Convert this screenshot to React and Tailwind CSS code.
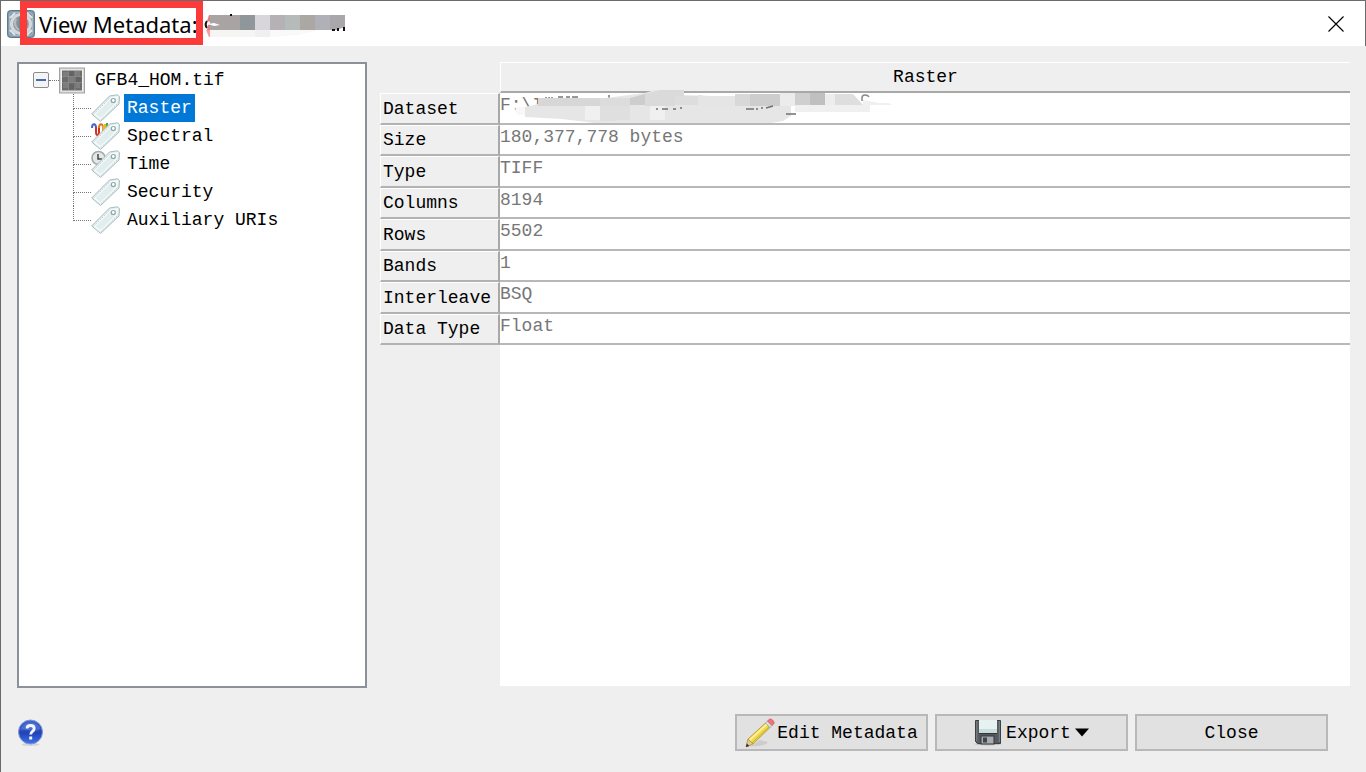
import { useState } from 'react';

const ITEMS = [
    { id: 'raster', label: 'Raster' },
    { id: 'spectral', label: 'Spectral', mark: 'wave' },
    { id: 'time', label: 'Time', mark: 'clock' },
    { id: 'security', label: 'Security' },
    { id: 'aux', label: 'Auxiliary URIs' },
];

const ROWS = [
    { label: 'Dataset', value: 'F:\\I', redacted: true },
    { label: 'Size', value: '180,377,778 bytes' },
    { label: 'Type', value: 'TIFF' },
    { label: 'Columns', value: '8194' },
    { label: 'Rows', value: '5502' },
    { label: 'Bands', value: '1' },
    { label: 'Interleave', value: 'BSQ' },
    { label: 'Data Type', value: 'Float' },
];

const AppIcon = () => (
    <svg width="28" height="28" viewBox="0 0 28 28" className="shrink-0" aria-hidden="true">
        <rect x="0.5" y="0.5" width="27" height="27" rx="3" fill="#7f98aa" stroke="#5f7b90" />
        <rect x="2.5" y="2.5" width="23" height="23" rx="3" fill="none" stroke="#a9bac6" />
        <path d="M3 8L8 3M20 3l5 5M3 20l5 5M20 25l5-5" stroke="#dfe6ea" strokeWidth="2" />
        <circle cx="14" cy="14" r="9.5" fill="#8b979f" stroke="#d3d8da" strokeWidth="3.2" />
        <path d="M12 7c6-1 9 3 8 8s-5 6-9 5z" fill="#76848d" />
        <path d="M9 9c-2 4-1 8 3 11" fill="none" stroke="#b4bcc1" strokeWidth="2" />
    </svg>
);

const RasterIcon = () => (
    <svg width="26" height="27" viewBox="0 0 26 27" className="shrink-0" aria-hidden="true">
        <rect x="0.5" y="1" width="25" height="25" fill="#d5d5d5" stroke="#a3a3a3" />
        <rect x="2" y="2.5" width="22" height="22" fill="#f1f1f1" />
        <rect x="3" y="3.5" width="20" height="20" fill="#6c6c6c" />
        <path d="M4 5h5v4H4zM16 4h5v5h-5zM10 10h5v5h-5zM4 16h5v5H4zM17 16h4v5h-4z" fill="#7d7d7d" />
        <path d="M10 4h5v5h-5zM17 10h5v5h-5zM10 17h5v5h-5z" fill="#636363" />
        <path d="M3 9.5h20M3 15.5h20M9.5 4v19M16 4v19" stroke="#8b8b8b" strokeWidth="0.8" />
    </svg>
);

const TagIcon = ({ mark }) => (
    <svg width="29" height="28" viewBox="0 0 29 28" className="shrink-0" aria-hidden="true">
        {mark === 'wave' && (
            <g fill="none" strokeWidth="2">
                <path d="M1 6c0-5 4-5 4 0" stroke="#3a68d8" />
                <path d="M5 5v5c0 4 3 4 3 0V5" stroke="#cf3323" />
                <path d="M8 6c0-5 4-5 4 0v7" stroke="#dd7924" />
                <path d="M12.5 11V4M14 2v5" stroke="#e5bd1c" />
                <path d="M16 1v5" stroke="#4aa64b" />
            </g>
        )}
        {mark === 'clock' && (
            <g>
                <circle cx="7.5" cy="8" r="6.5" fill="#e6e8e8" stroke="#a6aaaa" strokeWidth="1.6" />
                <path d="M7 4v5h4" fill="none" stroke="#414747" strokeWidth="1.5" />
            </g>
        )}
        <path d="M0.7 20L18.5 2l8-1.2 2 1.7-.5 7.5L9.5 27.5z" fill="#e2eeee" stroke="#a9bcbe" />
        <path d="M3.5 20.2L19.8 4l6.4-1-.6 6.2L9.6 25z" fill="none" stroke="#f7fcfc" strokeWidth="1.2" />
        <path d="M2.5 20.5L19 4M10 25.5L26.5 9.5" fill="none" stroke="#b0c2c3" strokeWidth="0.7" strokeDasharray="1.5 1.5" />
        <circle cx="22.3" cy="6.5" r="2" fill="#fff" stroke="#8fa5a7" strokeWidth="1.2" />
    </svg>
);

const PencilIcon = () => (
    <svg width="30" height="30" viewBox="0 0 30 30" className="shrink-0" aria-hidden="true">
        <path d="M5 28.5C13 29 22 27 23 24l-8-2z" fill="#cdcdcd" />
        <path d="M1 29l2-8 5 5z" fill="#e5c993" stroke="#a48c50" strokeWidth="0.8" />
        <path d="M1 29l.8-3.4 2.5 2.5z" fill="#292929" />
        <path d="M3 21L20.5 5l4.5 4.5L8 26z" fill="#f0d84d" stroke="#ac9534" strokeWidth="0.8" />
        <path d="M4.8 22L22 6.2" stroke="#fff1a0" strokeWidth="1.7" />
        <path d="M7 25L24.2 8.7" stroke="#cfaa2b" />
        <path d="M20.5 5l2-2 4.6 4.6L25 9.5z" fill="#d9e0e3" stroke="#9ba6aa" strokeWidth="0.7" />
        <path d="M22.5 3l1.5-1.6c2-1.6 6.5 2.2 4.7 4.6L27 7.6z" fill="#ee7479" stroke="#d55157" strokeWidth="0.7" />
    </svg>
);

const DiskIcon = () => (
    <svg width="28" height="27" viewBox="0 0 28 27" className="shrink-0" aria-hidden="true">
        <ellipse cx="14" cy="25" rx="13" ry="1.5" fill="#bababa" />
        <path d="M1.5 1.5h25v23h-23l-2-2z" fill="#555b60" stroke="#3b4044" />
        <rect x="5" y="1" width="18" height="13" fill="#e6f2f1" />
        <path d="M5 10h18v4H5z" fill="#c9dddc" />
        <path d="M5 14.5h18" stroke="#303437" />
        <path d="M2.8 2v20M25.3 2v21" stroke="#80868a" />
        <rect x="7" y="17" width="13" height="8" fill="#a7abb4" stroke="#34383b" />
        <rect x="9" y="18.5" width="4" height="5" fill="#41464b" />
    </svg>
);

const HelpIcon = () => (
    <svg width="27" height="28" viewBox="0 0 27 28" aria-hidden="true">
        <defs>
            <linearGradient id="help" x1="0" y1="0" x2="0" y2="1">
                <stop offset="0" stopColor="#4168d2" />
                <stop offset="0.55" stopColor="#2144b5" />
                <stop offset="1" stopColor="#3f73ef" />
            </linearGradient>
        </defs>
        <ellipse cx="13.5" cy="25.5" rx="9" ry="1.5" fill="#d3d3d6" />
        <circle cx="13.5" cy="13" r="12" fill="url(#help)" stroke="#8298d6" />
        <path d="M3.5 11C5 2 21 1 23.5 10 17 14 10 10 3.5 11" fill="#6080d8" opacity="0.55" />
        <path d="M10 9.5c0-4 7.2-4 7.2 0 0 3-3.5 2.8-3.5 6" fill="none" stroke="#f3f5fc" strokeWidth="2.8" />
        <rect x="12.2" y="17.5" width="3" height="3" fill="#f3f5fc" />
    </svg>
);

const TitleMosaic = () => (
    <svg width="140" height="28" viewBox="0 0 140 28" className="shrink-0 overflow-visible" aria-hidden="true">
        <path d="M1 11c-1.5 2-1.5 5 0 7" fill="none" stroke="#111" strokeWidth="2" />
        <path d="M3 5h2v7l-4-1zM2 15l3-1v6H1z" fill="#de7f82" />
        <path d="M0 20h5v7H3z" fill="#f79da0" />
        <path d="M4 5h30v15H4z" fill="#aaa3a4" />
        <path d="M34 5h15v15H34z" fill="#90979a" />
        <path d="M49 5h15v15H49z" fill="#d8d6da" />
        <path d="M64 5h15v15H64z" fill="#b5b1b4" />
        <path d="M79 5h15v15H79z" fill="#b5bbb9" />
        <path d="M94 5h15v15H94z" fill="#aba8a4" />
        <path d="M109 5h15v15h-15z" fill="#b0b1b8" />
        <path d="M124 5h15v12l-9 3h-6z" fill="#a9a7aa" />
        <path d="M4 20h45v7H4z" fill="#f5f5f3" />
        <path d="M49 20h15v7H49z" fill="#f0f0f2" />
        <path d="M64 20h50l-22 5-28 2z" fill="#f9f9f9" />
        <path d="M2 14l6-1 6 2-6 1z" fill="#fff" />
        <path d="M24 5h2M126 20h3M132 18v3M138 17v4" stroke="#111" strokeWidth="2" />
    </svg>
);

const PathMosaic = () => (
    <svg
        width="370"
        height="30"
        viewBox="0 0 370 30"
        className="absolute left-2 top-0 overflow-visible"
        aria-hidden="true"
    >
        {/* tops of the hidden characters */}
        <path d="M38 4v2M41 4v2M44 4v2M50 4h5M58 4h4M64 4h6M101 2v4M115 4h6M124 4h7M134 4h5" stroke="#777" strokeWidth="1.5" />
        <path d="M17 14l13-3V7l7-2h60l40-5 10-3h28v5l62 2v5h46v14l-8 5-12 2H87l-33-4-37-2z" fill="#e6e6e6" />
        <path d="M30 5h62v8H30z" fill="#d7d7d7" />
        <path d="M92 5h30v8H92z" fill="#dcdcdc" />
        <path d="M122 5l15-4v11h-15z" fill="#cdcdcd" />
        <path d="M137 1l15-4h24v8h-9v8h-30z" fill="#dadada" />
        <path d="M167 3h30l-7-1v10h-23z" fill="#ddd" />
        <path d="M190 3h37v10h-37z" fill="#e5e5e5" />
        <path d="M227 1h15v12h-15z" fill="#d8d8d8" />
        <path d="M242 1h30v12h-30z" fill="#cdcdcd" />
        <path d="M272 0h15v13h-15z" fill="#ececec" />
        <path d="M287 0h15v12h-15z" fill="#cfcfcf" />
        <path d="M302 0h15v12h-15z" fill="#c0c0c0" />
        <path d="M317 1h10v11h-10z" fill="#ededed" />
        <path d="M327 1h18l10 11h-28z" fill="#dedede" />
        <path d="M287 12h75v7h-75z" fill="#f0f0f0" />
        <path d="M355 7l16 3h10l3 2h-22l-7 1z" fill="#f0f0f0" />
        <path d="M77 13h15v14H77zM142 13h15v14h-15z" fill="#f0f0f0" />
        <path d="M92 13h15v15H92zM107 13h15v14h-15z" fill="#dfdfdf" />
        <path d="M7 14h10v8H9z" fill="#f8f8f8" />
        <path d="M148 16h2M154 16h6M165 16h3M172 15h2M238 16h8M249 15v2M254 14v2M258 15l7-2M278 21h10" stroke="#707070" strokeWidth="1.5" />
        <path d="M354 8V5q0-3 3-3t4 2" fill="none" stroke="#888" strokeWidth="1.5" />
    </svg>
);

// Dotted branch in front of a child node
const Branch = ({ last }) => (
    <span className="flex w-[18px] shrink-0 flex-col self-stretch" aria-hidden="true">
        <span className="flex-1 border-b border-l border-dotted border-[#777]" />
        <span className={last ? 'flex-1' : 'flex-1 border-l border-dotted border-[#777]'} />
    </span>
);

const FootButton = ({ children }) => (
    <button
        type="button"
        className="flex h-[37px] w-[193px] items-center justify-center border-2 border-[#b8b8b8] bg-[#e1e1e1] hover:bg-[#e5f1fb]"
    >
        {children}
    </button>
);

const App = () => {
    const [selected, setSelected] = useState('raster');
    const [open, setOpen] = useState(true);

    return (
        <div className="flex min-h-screen flex-col border-l border-t border-[#6b6b6b] bg-[#efefef] font-['Liberation_Mono',monospace] text-[18px] leading-7 text-black">
            <header className="relative flex h-[45px] items-center border-r border-[#6b6b6b] bg-white pl-1.5">
                <AppIcon />
                <h1 className="ml-1 whitespace-nowrap font-['Noto_Sans',sans-serif] text-[22px]">View Metadata:</h1>
                <span className="ml-2">
                    <TitleMosaic />
                </span>
                <button type="button" aria-label="Close window" className="ml-auto mr-5 p-px">
                    <svg width="16" height="16" viewBox="0 0 16 16" aria-hidden="true">
                        <path d="M0.5 0.5l15 15M15.5 0.5l-15 15" stroke="#000" strokeWidth="1.2" />
                    </svg>
                </button>
                <div className="pointer-events-none absolute left-[19px] top-0 h-11 w-[183px] border-[7px] border-[#fb3a3a]" />
            </header>

            <main className="flex flex-1 gap-[13px] pl-4 pr-4 pt-4">
                <nav className="w-[350px] shrink-0 border-2 border-[#8b9099] bg-white pl-3.5 pt-0.5">
                    <div className="flex h-7 items-center">
                        <button
                            type="button"
                            aria-label="Toggle GFB4_HOM.tif"
                            aria-expanded={open}
                            onClick={() => setOpen(!open)}
                            className="flex size-4 items-center justify-center rounded-xs border border-[#8c8c8c] bg-[#f4f4f4]"
                        >
                            <span className="h-0.5 w-2.5 bg-[#4a68b4]" />
                        </button>
                        <span className="w-2.5 border-t border-dotted border-[#777]" />
                        <RasterIcon />
                        <span className="ml-2.5">GFB4_HOM.tif</span>
                    </div>
                    {open && (
                        <ul className="pl-10">
                            {ITEMS.map((item, i) => (
                                <li key={item.id} className="flex h-7 items-center">
                                    <Branch last={i === ITEMS.length - 1} />
                                    <TagIcon mark={item.mark} />
                                    <button
                                        type="button"
                                        onClick={() => setSelected(item.id)}
                                        className={
                                            selected === item.id
                                                ? 'ml-1 bg-[#0078d7] px-[3px] text-white'
                                                : 'ml-1 px-[3px]'
                                        }
                                    >
                                        {item.label}
                                    </button>
                                </li>
                            ))}
                        </ul>
                    )}
                </nav>

                <section className="flex min-w-0 flex-1 flex-col pb-0.5">
                    <table className="w-full table-fixed border-separate border-spacing-0">
                        <colgroup>
                            <col className="w-[120px]" />
                            <col />
                        </colgroup>
                        <thead>
                            <tr className="h-[31px]">
                                <td />
                                <th
                                    scope="col"
                                    className="border-b-2 border-l border-t border-b-[#a8a8a8] border-l-white border-t-white p-0 text-center font-normal leading-7"
                                >
                                    Raster
                                </th>
                            </tr>
                        </thead>
                        <tbody>
                            {ROWS.map((row) => (
                                <tr key={row.label} className="odd:h-8 even:h-[31px]">
                                    <th
                                        scope="row"
                                        className="whitespace-nowrap border-b-2 border-l border-r-2 border-t border-b-[#b2b2b2] border-l-white border-r-[#a8a8a8] border-t-white p-0 pl-0.5 text-left font-normal leading-7"
                                    >
                                        {row.label}
                                    </th>
                                    <td className="relative whitespace-nowrap border-b-2 border-[#b8b8b8] bg-white p-0 align-top leading-6 text-[#777]">
                                        {row.value}
                                        {row.redacted && <PathMosaic />}
                                    </td>
                                </tr>
                            ))}
                        </tbody>
                    </table>
                    <div className="ml-[120px] flex-1 bg-white" />
                </section>
            </main>

            <footer className="flex items-center gap-[7px] pb-[21px] pl-4 pr-[38px] pt-[26px]">
                <button type="button" aria-label="Help" className="mr-auto">
                    <HelpIcon />
                </button>
                <FootButton>
                    <PencilIcon />
                    <span className="ml-0.5">Edit Metadata</span>
                </FootButton>
                <FootButton>
                    <DiskIcon />
                    <span className="ml-1">Export</span>
                    <svg width="14" height="9" viewBox="0 0 14 9" className="ml-1" aria-hidden="true">
                        <path d="M0 0.5h14L7 8.5z" />
                    </svg>
                </FootButton>
                <FootButton>Close</FootButton>
            </footer>
        </div>
    );
};

export default App;
